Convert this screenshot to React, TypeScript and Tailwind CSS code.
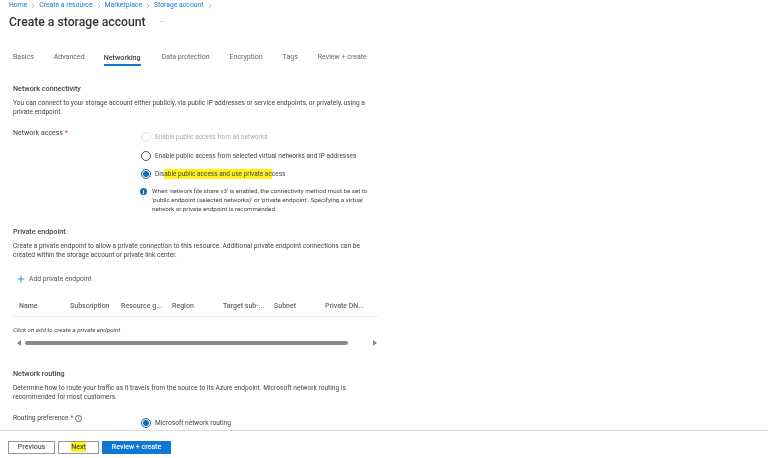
import { ChevronRight, Plus } from 'lucide-react';

const crumbs = ['Home', 'Create a resource', 'Marketplace', 'Storage account'];
const tabs = ['Basics', 'Advanced', 'Networking', 'Data protection', 'Encryption', 'Tags', 'Review + create'];
const columns = ['Name', 'Subscription', 'Resource g...', 'Region', 'Target sub-...', 'Subnet', 'Private DN...'];

const Radio = ({ checked = false, disabled = false }: { checked?: boolean; disabled?: boolean }) => (
    <span className={`flex h-[10px] w-[10px] shrink-0 items-center justify-center rounded-full border ${checked ? 'border-[#0f6cbd]' : disabled ? 'border-[#e4e4e4]' : 'border-[#555]'}`}>
        {checked && <span className="h-[6px] w-[6px] rounded-full bg-[#0f6cbd]" />}
    </span>
);

const Highlighted = ({ children }: { children: string }) => (
    <span className="bg-[#fdf21c] py-[1px]">{children}</span>
);

const App = () => {
    return (
        <div className="flex h-[458px] w-[768px] flex-col overflow-hidden bg-white text-[6.6px] leading-[9px] text-[#444] font-['Roboto',sans-serif] blur-[0.4px]">
            <main className="h-[430px] shrink-0 overflow-hidden pl-[9px]">
                <nav className="mt-[1px] flex h-[9px] items-center text-[6.8px] text-[#0f78d4]">
                    {crumbs.map((c) => (
                        <span key={c} className="flex items-center">
                            {c}
                            <ChevronRight className="mx-[2px] h-[8px] w-[8px] text-[#999]" />
                        </span>
                    ))}
                </nav>
                <div className="mt-[5px] flex h-[14px] items-center">
                    <h1 className="text-[12.2px] font-medium leading-[14px] text-[#333]">Create a storage account</h1>
                    <span className="ml-[14px] text-[7px] text-[#999]">···</span>
                </div>

                <div className="mt-[23px] flex h-[14px] gap-[20px] pl-[4px] pt-[1px] text-[7px] text-[#666]">
                    {tabs.map((t) => (
                        <span key={t} className={t === 'Networking' ? '-ml-[1px] mr-[1px] h-[13px] border-b-2 border-[#0f78d4] text-[7.2px] font-medium text-[#444]' : ''}>
                            {t}
                        </span>
                    ))}
                </div>

                <div className="pl-[4px]">
                    <h2 className="mt-[18px] text-[7.2px] font-medium">Network connectivity</h2>
                    <p className="mt-[6px] w-[355px]">
                        You can connect to your storage account either publicly, via public IP addresses or service endpoints, or privately, using a private endpoint.
                    </p>

                    <div className="mt-[12px] flex">
                        <span className="w-[128px] shrink-0 text-[7px]">Network access <span className="text-[#c33]">*</span></span>
                        <div className="mt-[3px] flex flex-col text-[6.5px]">
                            <label className="flex items-center gap-[4px] text-[#aaa]"><Radio disabled />Enable public access from all networks</label>
                            <label className="mt-[9px] flex items-center gap-[4px]"><Radio />Enable public access from selected virtual networks and IP addresses</label>
                            <label className="mt-[8px] flex items-center gap-[4px]">
                                <Radio checked />
                                <span>Dis<Highlighted>able public access and use private ac</Highlighted>cess</span>
                            </label>
                            <div className="mt-[8px] -ml-[1px] flex w-[228px] gap-[5px]">
                                <span className="mt-[1px] flex h-[7px] w-[7px] shrink-0 items-center justify-center rounded-full bg-[#0f6cbd] text-[6px] font-bold text-white">i</span>
                                <p className="text-[6.2px]">When 'network file share v3' is enabled, the connectivity method must be set to 'public endpoint (selected networks)' or 'private endpoint'. Specifying a virtual network or private endpoint is recommended.</p>
                            </div>
                        </div>
                    </div>

                    <h2 className="mt-[13px] text-[7.2px] font-medium">Private endpoint</h2>
                    <p className="mt-[6px] w-[355px]">
                        Create a private endpoint to allow a private connection to this resource. Additional private endpoint connections can be created within the storage account or private link center.
                    </p>

                    <button className="mt-[14px] flex items-center gap-[3px] pl-[3px] text-[6.8px] text-[#555]">
                        <Plus className="h-[10px] w-[10px] text-[#0f78d4]" />
                        Add private endpoint
                    </button>

                    <div className="mt-[16px] flex h-[17px] w-[365px] border-b border-[#eee] pl-[6px] pt-[2px] text-[7px] font-medium text-[#666]">
                        {columns.map((c) => <span key={c} className="w-[51px] shrink-0">{c}</span>)}
                    </div>
                    <p className="mt-[9px] text-[6.2px] italic">Click on add to create a private endpoint</p>
                    <div className="mt-[5px] flex h-[6px] w-[365px] items-center pl-[4px] pr-[1px]">
                        <span className="h-0 w-0 border-y-[3px] border-r-[4px] border-y-transparent border-r-[#888]" />
                        <span className="ml-[4px] h-[4px] w-[323px] rounded-full bg-[#8a8a8a]" />
                        <span className="ml-auto h-0 w-0 border-y-[3px] border-l-[4px] border-y-transparent border-l-[#888]" />
                    </div>

                    <h2 className="mt-[23px] text-[7.2px] font-medium">Network routing</h2>
                    <p className="mt-[6px] w-[355px]">
                        Determine how to route your traffic as it travels from the source to its Azure endpoint. Microsoft network routing is recommended for most customers.
                    </p>
                    <div className="mt-[12px] flex">
                        <span className="flex w-[128px] shrink-0 items-start gap-[2px]">
                            Routing preference <span className="text-[#c33]">*</span>
                            <span className="mt-[1px] flex h-[7px] w-[7px] items-center justify-center rounded-full border border-[#666] text-[5px] leading-none">i</span>
                        </span>
                        <label className="mt-[4px] flex items-center gap-[4px]"><Radio checked />Microsoft network routing</label>
                    </div>
                </div>
            </main>

            <footer className="flex h-[28px] items-center gap-[3px] border-t border-[#ddd] pl-[8px] pt-[5px] text-[7px] font-medium">
                <button className="h-[13px] w-[47px] border border-[#999] text-[#555]">Previous</button>
                <button className="h-[13px] w-[41px] border border-[#999] text-[#444]"><Highlighted>Next</Highlighted></button>
                <button className="h-[13px] w-[69px] bg-[#0f78d4] text-white">Review + create</button>
            </footer>
        </div>
    );
};

export default App;
